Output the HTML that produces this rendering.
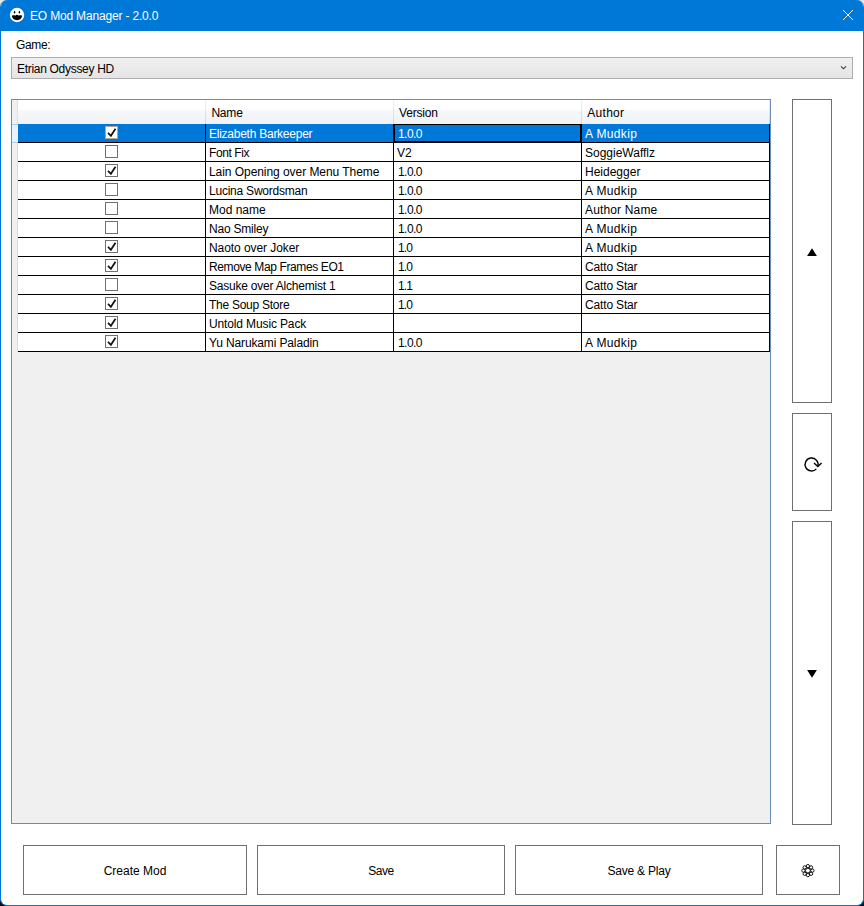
<!DOCTYPE html><html><head><meta charset="utf-8"><title>EO Mod Manager</title><style>
*{box-sizing:border-box;margin:0;padding:0}
html,body{width:864px;height:906px;overflow:hidden;background:#0a0806}
body{font-family:"Liberation Sans",sans-serif;font-size:12px;color:#000;position:relative}
.abs{position:absolute}
#win{position:absolute;left:0;top:0;width:864px;height:906px;background:#fff;border:1px solid #0078d7;border-top:0;border-radius:7px;overflow:hidden}
#cornerbg{position:absolute;left:0;top:0;width:864px;height:20px;background:#e9e6e2}
#title{position:absolute;left:-1px;top:0;width:864px;height:31px;background:#0078d7;color:#fff}
.t{position:absolute;white-space:nowrap;line-height:14px;height:14px}
#combo{position:absolute;left:10px;top:57px;width:842px;height:22px;border:1px solid #adadad;background:linear-gradient(#f0f0f0,#e5e5e5)}
#grid{position:absolute;left:10px;top:99px;width:760px;height:725px;border:1px solid #6a8cb8;background:#f0f0f0}
#hdr{position:absolute;left:0;top:0;width:758px;height:24px;background:linear-gradient(#fff 0%,#fff 41%,#f7f8fa 41%,#f1f2f4 100%)}
.hsep{position:absolute;top:0;width:1px;height:24px;background:linear-gradient(#f2f2f2,#d5d5d5)}
.row{position:absolute;left:6px;width:752px;height:19px;background:#fff;border-bottom:1px solid #000}
.row.sel{background:#0078d7;color:#fff}
.vl{position:absolute;top:0;width:1px;height:19px;background:#000}
.cb{position:absolute;left:87px;top:2px;width:13px;height:13px;border:1px solid #707070;background:#fff}
.sel .cb{border-color:#b9a38f}
.btn{position:absolute;border:1px solid #707070;background:#fff}
</style></head><body>
<div id="cornerbg"></div>
<div id="win">
<div id="title">
<svg class="abs" style="left:9px;top:7px" width="16" height="16" viewBox="0 0 16 16"><circle cx="8" cy="8" r="7.2" fill="#fff"/><ellipse cx="5.6" cy="5.2" rx="0.7" ry="1.3" fill="#000"/><ellipse cx="10.4" cy="5.2" rx="0.7" ry="1.3" fill="#000"/><path d="M2.8 8.6 Q5 7.8 6.6 8.4 Q8 7.2 9.4 8.4 Q11 7.8 13.2 8.6 Q12.6 13.1 8 13.3 Q3.4 13.1 2.8 8.6Z" fill="#000"/></svg>
<div class="t" style="left:30px;top:9px;letter-spacing:-0.176px;">EO Mod Manager - 2.0.0</div>
<svg class="abs" style="left:842px;top:9px" width="12" height="12" viewBox="0 0 12 12"><path d="M1 1L11 11M11 1L1 11" stroke="#fff" stroke-width="1" fill="none"/></svg>
</div>
<div class="t" style="left:15px;top:38px;letter-spacing:-0.350px;">Game:</div>
<div id="combo"><div class="t" style="left:5px;top:4px;letter-spacing:-0.300px;">Etrian Odyssey HD</div>
<svg class="abs" style="left:828px;top:7px" width="8" height="6" viewBox="0 0 8 6"><path d="M1 1.3L3.5 3.8L6 1.3" stroke="#3a3a3a" stroke-width="1.15" fill="none"/></svg></div>
<div id="grid">
<div id="hdr">
<div class="abs" style="left:0;top:0;width:6px;height:24px;background:#f0f0f0;border-right:1px solid #e2e2e2"></div>
<div class="hsep" style="left:193px"></div>
<div class="hsep" style="left:381px"></div>
<div class="hsep" style="left:569px"></div>
<div class="hsep" style="left:757px"></div>
<div class="t" style="left:199.4px;top:6px;letter-spacing:-0.200px;">Name</div>
<div class="t" style="left:387px;top:6px;letter-spacing:-0.183px;">Version</div>
<div class="t" style="left:575.3px;top:6px;letter-spacing:0.280px;">Author</div>
</div>
<div class="abs" style="left:0;top:24px;width:6px;height:228px;background:#f0f0f0;border-right:1px solid #dcdcdc"></div>
<div class="abs" style="left:0;top:24px;width:6px;height:19px;background:#e8f4fc;border-top:1px solid #9ed3fb;border-bottom:1px solid #9ed3fb"></div>
<div class="row sel" style="top:24px">
<div class="cb"><svg class="abs" style="left:1px;top:1px" width="11" height="11" viewBox="0 0 11 11"><path d="M1.0 4.8L3.9 7.8L8.5 0.8" stroke="#111" stroke-width="1.7" fill="none"/></svg></div>
<div class="vl" style="left:187px"></div>
<div class="vl" style="left:375px"></div>
<div class="vl" style="left:563px"></div>
<div class="vl" style="left:751px"></div>
<div class="abs" style="left:376px;top:0;width:187px;height:18px;border:1px solid #000"></div>
<div class="t" style="left:191px;top:3px;letter-spacing:-0.250px;">Elizabeth Barkeeper</div>
<div class="t" style="left:380px;top:3px;letter-spacing:-0.550px;">1.0.0</div>
<div class="t" style="left:567px;top:3px;letter-spacing:0.357px;">A Mudkip</div>
</div>
<div class="row" style="top:43px">
<div class="cb"></div>
<div class="vl" style="left:187px"></div>
<div class="vl" style="left:375px"></div>
<div class="vl" style="left:563px"></div>
<div class="vl" style="left:751px"></div>
<div class="t" style="left:191px;top:3px;letter-spacing:-0.400px;">Font Fix</div>
<div class="t" style="left:379px;top:3px;">V2</div>
<div class="t" style="left:567px;top:3px;">SoggieWafflz</div>
</div>
<div class="row" style="top:62px">
<div class="cb"><svg class="abs" style="left:1px;top:1px" width="11" height="11" viewBox="0 0 11 11"><path d="M1.0 4.8L3.9 7.8L8.5 0.8" stroke="#111" stroke-width="1.7" fill="none"/></svg></div>
<div class="vl" style="left:187px"></div>
<div class="vl" style="left:375px"></div>
<div class="vl" style="left:563px"></div>
<div class="vl" style="left:751px"></div>
<div class="t" style="left:191px;top:3px;letter-spacing:-0.056px;">Lain Opening over Menu Theme</div>
<div class="t" style="left:380px;top:3px;letter-spacing:-0.550px;">1.0.0</div>
<div class="t" style="left:567px;top:3px;">Heidegger</div>
</div>
<div class="row" style="top:81px">
<div class="cb"></div>
<div class="vl" style="left:187px"></div>
<div class="vl" style="left:375px"></div>
<div class="vl" style="left:563px"></div>
<div class="vl" style="left:751px"></div>
<div class="t" style="left:191px;top:3px;letter-spacing:-0.227px;">Lucina Swordsman</div>
<div class="t" style="left:380px;top:3px;letter-spacing:-0.550px;">1.0.0</div>
<div class="t" style="left:567px;top:3px;letter-spacing:0.357px;">A Mudkip</div>
</div>
<div class="row" style="top:100px">
<div class="cb"></div>
<div class="vl" style="left:187px"></div>
<div class="vl" style="left:375px"></div>
<div class="vl" style="left:563px"></div>
<div class="vl" style="left:751px"></div>
<div class="t" style="left:191px;top:3px;">Mod name</div>
<div class="t" style="left:380px;top:3px;letter-spacing:-0.550px;">1.0.0</div>
<div class="t" style="left:567px;top:3px;letter-spacing:0.150px;">Author Name</div>
</div>
<div class="row" style="top:119px">
<div class="cb"></div>
<div class="vl" style="left:187px"></div>
<div class="vl" style="left:375px"></div>
<div class="vl" style="left:563px"></div>
<div class="vl" style="left:751px"></div>
<div class="t" style="left:191px;top:3px;letter-spacing:-0.211px;">Nao Smiley</div>
<div class="t" style="left:380px;top:3px;letter-spacing:-0.550px;">1.0.0</div>
<div class="t" style="left:567px;top:3px;letter-spacing:0.357px;">A Mudkip</div>
</div>
<div class="row" style="top:138px">
<div class="cb"><svg class="abs" style="left:1px;top:1px" width="11" height="11" viewBox="0 0 11 11"><path d="M1.0 4.8L3.9 7.8L8.5 0.8" stroke="#111" stroke-width="1.7" fill="none"/></svg></div>
<div class="vl" style="left:187px"></div>
<div class="vl" style="left:375px"></div>
<div class="vl" style="left:563px"></div>
<div class="vl" style="left:751px"></div>
<div class="t" style="left:191px;top:3px;letter-spacing:-0.073px;">Naoto over Joker</div>
<div class="t" style="left:380px;top:3px;letter-spacing:-0.900px;">1.0</div>
<div class="t" style="left:567px;top:3px;letter-spacing:0.357px;">A Mudkip</div>
</div>
<div class="row" style="top:157px">
<div class="cb"><svg class="abs" style="left:1px;top:1px" width="11" height="11" viewBox="0 0 11 11"><path d="M1.0 4.8L3.9 7.8L8.5 0.8" stroke="#111" stroke-width="1.7" fill="none"/></svg></div>
<div class="vl" style="left:187px"></div>
<div class="vl" style="left:375px"></div>
<div class="vl" style="left:563px"></div>
<div class="vl" style="left:751px"></div>
<div class="t" style="left:191px;top:3px;letter-spacing:-0.385px;">Remove Map Frames EO1</div>
<div class="t" style="left:380px;top:3px;letter-spacing:-0.900px;">1.0</div>
<div class="t" style="left:567px;top:3px;letter-spacing:-0.156px;">Catto Star</div>
</div>
<div class="row" style="top:176px">
<div class="cb"></div>
<div class="vl" style="left:187px"></div>
<div class="vl" style="left:375px"></div>
<div class="vl" style="left:563px"></div>
<div class="vl" style="left:751px"></div>
<div class="t" style="left:191px;top:3px;letter-spacing:-0.218px;">Sasuke over Alchemist 1</div>
<div class="t" style="left:380px;top:3px;letter-spacing:-0.900px;">1.1</div>
<div class="t" style="left:567px;top:3px;letter-spacing:-0.156px;">Catto Star</div>
</div>
<div class="row" style="top:195px">
<div class="cb"><svg class="abs" style="left:1px;top:1px" width="11" height="11" viewBox="0 0 11 11"><path d="M1.0 4.8L3.9 7.8L8.5 0.8" stroke="#111" stroke-width="1.7" fill="none"/></svg></div>
<div class="vl" style="left:187px"></div>
<div class="vl" style="left:375px"></div>
<div class="vl" style="left:563px"></div>
<div class="vl" style="left:751px"></div>
<div class="t" style="left:191px;top:3px;letter-spacing:-0.269px;">The Soup Store</div>
<div class="t" style="left:380px;top:3px;letter-spacing:-0.900px;">1.0</div>
<div class="t" style="left:567px;top:3px;letter-spacing:-0.156px;">Catto Star</div>
</div>
<div class="row" style="top:214px">
<div class="cb"><svg class="abs" style="left:1px;top:1px" width="11" height="11" viewBox="0 0 11 11"><path d="M1.0 4.8L3.9 7.8L8.5 0.8" stroke="#111" stroke-width="1.7" fill="none"/></svg></div>
<div class="vl" style="left:187px"></div>
<div class="vl" style="left:375px"></div>
<div class="vl" style="left:563px"></div>
<div class="vl" style="left:751px"></div>
<div class="t" style="left:191px;top:3px;letter-spacing:-0.131px;">Untold Music Pack</div>
</div>
<div class="row" style="top:233px">
<div class="cb"><svg class="abs" style="left:1px;top:1px" width="11" height="11" viewBox="0 0 11 11"><path d="M1.0 4.8L3.9 7.8L8.5 0.8" stroke="#111" stroke-width="1.7" fill="none"/></svg></div>
<div class="vl" style="left:187px"></div>
<div class="vl" style="left:375px"></div>
<div class="vl" style="left:563px"></div>
<div class="vl" style="left:751px"></div>
<div class="t" style="left:191px;top:3px;letter-spacing:-0.133px;">Yu Narukami Paladin</div>
<div class="t" style="left:380px;top:3px;letter-spacing:-0.550px;">1.0.0</div>
<div class="t" style="left:567px;top:3px;letter-spacing:0.357px;">A Mudkip</div>
</div>
</div>
<div class="btn" style="left:791px;top:99px;width:40px;height:304px"><svg class="abs" style="left:14px;top:148px" width="10" height="8" viewBox="0 0 10 8"><path d="M5 0.2L9.9 7.9H0.1Z" fill="#000"/></svg></div>
<div class="btn" style="left:791px;top:413px;width:40px;height:98px"><svg class="abs" style="left:8px;top:40px" width="24" height="22" viewBox="0 0 24 22"><path d="M15.4 14.85A6.5 6.5 0 1 1 17 11.6" stroke="#000" stroke-width="1.4" fill="none"/><path d="M13 9.1L16.8 12.6L20.6 9.1" stroke="#000" stroke-width="1.4" fill="none"/></svg></div>
<div class="btn" style="left:791px;top:521px;width:40px;height:304px"><svg class="abs" style="left:14px;top:148px" width="10" height="8" viewBox="0 0 10 8"><path d="M5 7.8L9.9 0.1H0.1Z" fill="#000"/></svg></div>
<div class="btn" style="left:22px;top:845px;width:224px;height:50px"><div class="t" style="left:0px;top:18px;width:222px;text-align:center;">Create Mod</div></div>
<div class="btn" style="left:256px;top:845px;width:248px;height:50px"><div class="t" style="left:0px;top:18px;letter-spacing:-0.467px;width:246px;text-align:center;">Save</div></div>
<div class="btn" style="left:514px;top:845px;width:248px;height:50px"><div class="t" style="left:0px;top:18px;letter-spacing:-0.210px;width:246px;text-align:center;">Save &amp; Play</div></div>
<div class="btn" style="left:775px;top:845px;width:64px;height:50px"><svg class="abs" style="left:24px;top:18px" width="14" height="14" viewBox="0 0 14 14"><g fill="none" stroke="#000" stroke-width="0.9"><circle cx="11.40" cy="6.60" r="1.65"/><circle cx="10.08" cy="9.78" r="1.65"/><circle cx="6.90" cy="11.10" r="1.65"/><circle cx="3.72" cy="9.78" r="1.65"/><circle cx="2.40" cy="6.60" r="1.65"/><circle cx="3.72" cy="3.42" r="1.65"/><circle cx="6.90" cy="2.10" r="1.65"/><circle cx="10.08" cy="3.42" r="1.65"/><circle cx="6.90" cy="6.60" r="2.4" stroke-width="0.95"/></g></svg></div>
</div></body></html>
